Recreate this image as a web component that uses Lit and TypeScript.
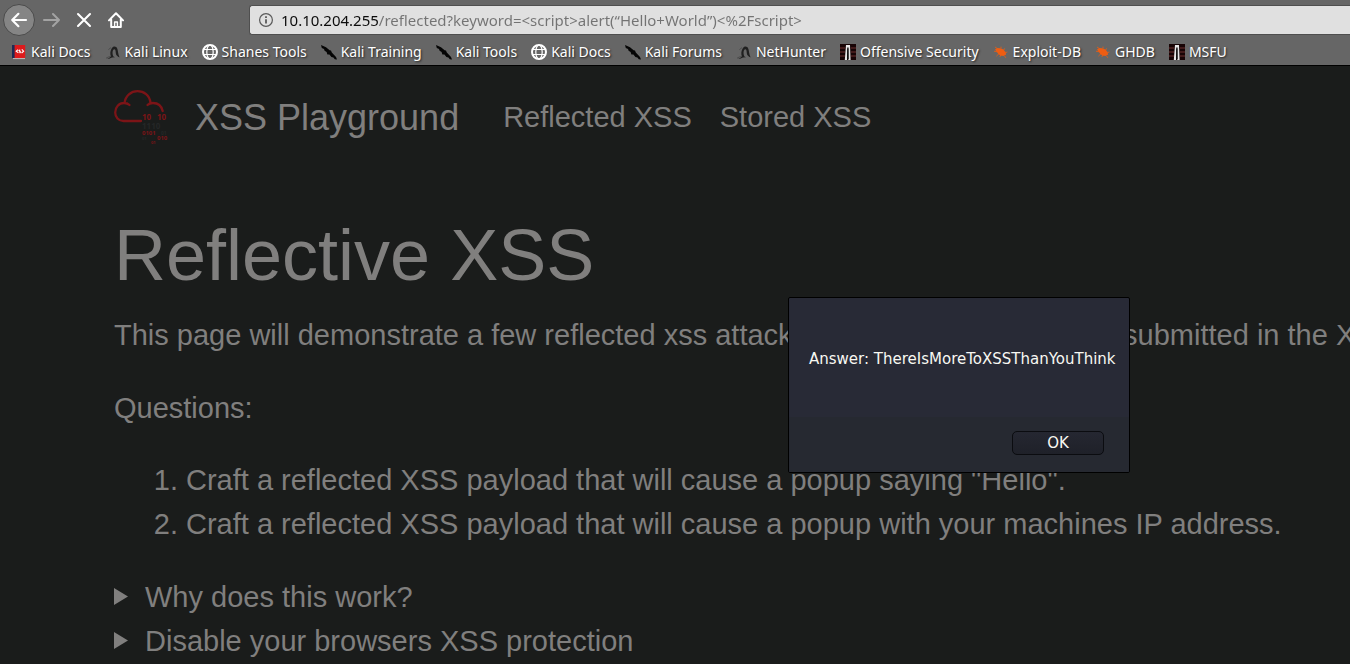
import { LitElement, html, css, svg, TemplateResult } from "lit";
import { customElement, state } from "lit/decorators.js";

type IconName = "docs" | "dragon" | "globe" | "knife" | "offsec" | "bug";

const ICONS: Record<IconName, TemplateResult> = {
  docs: svg`<rect x="1" y="1" width="3" height="13" fill="#1d2a55"/><rect x="3.6" y="1" width="10.6" height="13" fill="#dd1a1c"/>
    <path d="M2 14.6h12" stroke="#c9b9b9" stroke-width="1"/>
    <path d="M7 5.6L5.2 7.3 7.4 8.8M10.8 5.4L12.6 7.2 10.6 9M7.6 6.2L10 8.4M8.6 5.6L9 9.2" stroke="#fff" stroke-width="1.1" fill="none"/>`,
  dragon: svg`<path d="M3.4 5.6L6 3.6M1 14.2C4 12.6 5 12.4 6.2 12.2" stroke="#4c4c4c" stroke-width="1" fill="none"/>
    <path d="M1.4 14.6C3.6 14.4 4.6 13.6 6 12.4 4.8 10 5.2 6.6 6.8 4.2 8.4 1.8 11.4 2.2 12.4 5 13.2 7.4 12.8 9.4 14.6 13.4 12.6 12.6 11 11.4 10.8 9.2 10.7 7.2 10.6 5.2 9.2 5.2 7.6 5.4 6.9 9 8.4 12.4L10 13.2 7 13.4C5 14.4 3.4 15 1.4 14.6z" fill="#202020"/>`,
  globe: svg`<g fill="none" stroke="#fff"><circle cx="8" cy="8" r="7" stroke-width="2"/><ellipse cx="8" cy="8" rx="3.2" ry="7" stroke-width="1.2"/><path d="M1.4 5.5h13.2M1.4 10.5h13.2" stroke-width="1.2"/></g>`,
  knife: svg`<path d="M0 1L5 3.2 8.6 6.2 10 6.4 10.8 8.6 15 13 16 15.4 13.8 15.2 12.4 13.4 10.4 13 8.4 10.6 6.4 10.6 5.6 8 3.6 6.8 3 5 .8 4z" fill="#050505"/>`,
  offsec: svg`<path d="M0 0h16v16H0z" fill="#170405"/><path d="M0 4h5M11 4h5M0 8h5M11 8h5M0 12h5M11 12h5" stroke="#522222" stroke-width="1.4"/>
    <path d="M6 1h4l.6 15H8.4L8.2 5H7.6L7 16H4.8z" fill="#e8e6e6"/><path d="M7.2 3.6h1.4V15H7z" fill="#111"/>`,
  bug: svg`<path d="M2 5.6L4.4 4 7.2 4.2 10.4 5.4 12.6 8 13.2 10.6 10.4 12 7.2 11.4 4.8 9.2z" fill="#ee5d12"/>
    <path d="M2 3l3 2M8 2.6v2M11.6 4.4l-1 2M1 7.2l3.4.6M3.4 12.2l2.6-2.6M6.8 13l1.2-2.2M11.4 11.8l1.4 2M12.6 8.6L14.4 8" stroke="#ee5d12" stroke-width=".8"/>`,
};

const BOOKMARKS: { icon: IconName; label: string }[] = [
  { icon: "docs", label: "Kali Docs" },
  { icon: "dragon", label: "Kali Linux" },
  { icon: "globe", label: "Shanes Tools" },
  { icon: "knife", label: "Kali Training" },
  { icon: "knife", label: "Kali Tools" },
  { icon: "globe", label: "Kali Docs" },
  { icon: "knife", label: "Kali Forums" },
  { icon: "dragon", label: "NetHunter" },
  { icon: "offsec", label: "Offensive Security" },
  { icon: "bug", label: "Exploit-DB" },
  { icon: "bug", label: "GHDB" },
  { icon: "offsec", label: "MSFU" },
];

@customElement("browser-chrome")
class BrowserChrome extends LitElement {
  static styles = css`
    :host { display: block; background: #666; border-bottom: 1px solid #000; font-family: "Noto Sans", sans-serif; }
    .toolbar { display: flex; align-items: center; height: 40px; padding-left: 3px; }
    .tool { width: 32px; height: 32px; flex: none; padding: 0; border: 0; background: none; display: grid; place-items: center; color: #fff; }
    .tool svg { width: 18px; height: 18px; }
    .back { background: #858585; border: 1px solid #4b4b4b; border-radius: 50%; }
    .forward { color: #a3a3a3; }
    .address { flex: 1; display: flex; align-items: center; gap: 7px; height: 28px; margin-left: 118px; padding-left: 8px; background: #e0e0e0; border: 1px solid #4f4f4f; border-right: 0; border-radius: 3px 0 0 3px; }
    .address svg { width: 16px; height: 16px; flex: none; }
    .url { flex: 1; min-width: 0; border: 0; padding: 0; outline: 0; font: 15px/20px "Noto Sans", sans-serif; color: transparent; background: linear-gradient(90deg, #0c0c0c 98px, #737373 98px); -webkit-background-clip: text; background-clip: text; }
    .bookmarks { display: flex; gap: 14px; padding: 0 0 1px 11px; height: 24px; align-items: center; overflow: hidden; }
    .bookmark { display: flex; align-items: center; gap: 4px; flex: none; color: #fff; font-size: 14px; line-height: 20px; text-decoration: none; text-shadow: 1px 1px 2px #222; }
    .bookmark svg { width: 16px; height: 16px; }
  `;

  render() {
    return html`
      <div class="toolbar">
        <button class="tool back" aria-label="Back"><svg viewBox="0 0 18 18" fill="none" stroke="currentColor" stroke-width="2.2" stroke-linecap="round" stroke-linejoin="round"><path d="M16 9H2.2M8.4 2.8L2.2 9l6.2 6.2"/></svg></button>
        <button class="tool forward" aria-label="Forward"><svg viewBox="0 0 18 18" fill="none" stroke="currentColor" stroke-width="2" stroke-linecap="round" stroke-linejoin="round"><path d="M2 9h15M11 3l6 6-6 6"/></svg></button>
        <button class="tool" aria-label="Stop"><svg viewBox="0 0 18 18" fill="none" stroke="currentColor" stroke-width="2.1" stroke-linecap="round"><path d="M4 3l12 12M16 3L4 15"/></svg></button>
        <button class="tool" aria-label="Home"><svg viewBox="0 0 18 18" fill="none" stroke="currentColor" stroke-width="2" stroke-linejoin="round" stroke-linecap="round"><path d="M3 9.4L10 2.2l7 7.2M5.2 8.4V16h9.6V8.4"/><path d="M8.6 16v-5h2.8v5" stroke-width="1.4"/></svg></button>
        <div class="address">
          <svg viewBox="0 0 16 16" fill="none" stroke="#5a5a5a"><circle cx="8" cy="8" r="6.4" stroke-width="1.2"/><path d="M8 7.2v4.4M8 4.2v1.8" stroke-width="1.8"/></svg>
          <input class="url" aria-label="Address" .value=${"10.10.204.255/reflected?keyword=<script>alert(“Hello+World”)<%2Fscript>"} />
        </div>
      </div>
      <nav class="bookmarks" aria-label="Bookmarks">
        ${BOOKMARKS.map((b) => html`<a class="bookmark" href="#"><svg viewBox="0 0 16 16">${ICONS[b.icon]}</svg>${b.label}</a>`)}
      </nav>
    `;
  }
}

@customElement("alert-dialog")
class AlertDialog extends LitElement {
  static styles = css`
    :host { display: block; box-sizing: border-box; width: 342px; background: #282a36; border: 1px solid #000; border-radius: 2px; color: #f8f8f2; font-family: "DejaVu Sans", sans-serif; font-size: 15px; line-height: 18px; overflow: hidden; }
    .message { margin: 0; padding: 52px 14px 49px 20px; white-space: nowrap; }
    .actions { display: flex; justify-content: flex-end; padding: 14px 25px 17px; background: #262931; }
    .ok { width: 92px; height: 24px; padding: 0; border: 1px solid #0b0c10; border-radius: 5px; background: linear-gradient(#252731, #1f2129); color: inherit; font: inherit; }
  `;

  render() {
    return html`
      <p class="message">Answer: ThereIsMoreToXSSThanYouThink</p>
      <div class="actions"><button class="ok" @click=${() => this.dispatchEvent(new Event("close"))}>OK</button></div>
    `;
  }
}

@customElement("app-root")
class AppRoot extends LitElement {
  @state() private open = true;

  static styles = css`
    :host { display: flex; flex-direction: column; height: 100vh; overflow: hidden; position: relative; background: #1a1c1b; color: #807f7e; font: 29px/1.5 "Liberation Sans", Arial, sans-serif; }
    browser-chrome { flex: none; }
    .page { flex: 1; min-height: 0; overflow: hidden; padding-left: 114px; }
    .navbar { display: flex; align-items: center; height: 104px; white-space: nowrap; }
    .navbar a { color: inherit; text-decoration: none; }
    .brand { display: flex; align-items: center; gap: 27px; font-size: 36px; line-height: 54px; margin-right: 44px; }
    .logo { width: 54px; height: 56px; font-family: "Noto Sans", sans-serif; font-weight: 700; }
    .links { display: flex; gap: 28px; }
    h1 { margin: 42px 0 16px; font-size: 72px; font-weight: 400; line-height: 1.2; }
    p { margin: 0 0 29px; white-space: nowrap; }
    ol { margin: 0 0 30px; padding-left: 72px; }
    summary { display: flex; align-items: center; gap: 17px; list-style: none; }
    summary svg { width: 14px; height: 20px; fill: #807f7e; }
    alert-dialog { position: absolute; left: 788px; top: 297px; }
  `;

  render() {
    const arrow = html`<svg viewBox="0 0 14 20"><path d="M0 0L14 8.5 0 17z"/></svg>`;
    return html`
      <browser-chrome></browser-chrome>
      <main class="page">
        <nav class="navbar">
          <a class="brand" href="#">
            <svg class="logo" viewBox="0 0 54 56" aria-hidden="true">
              <path d="M27 31H9.500C4.500 31 1.200 27 1.200 22.500 1.200 17 5 13 10 13c2 0 4 .6 5.500 2M10.500 13C11.500 5.500 17 1.200 23.500 1.200 30 1.200 35.500 5 36.500 12.500M33.500 15C35 13.500 37 13 39 13c5 0 8.500 3 9.700 8" fill="none" stroke="#7c1417" stroke-width="2.3" stroke-linecap="round"/>
              <g fill="#7c1417"><text x="28" y="30" font-size="8">10</text><text x="43" y="30" font-size="8">10</text><text x="28" y="45" font-size="6">0101</text><text x="43" y="50" font-size="6">010</text><text x="37" y="54" font-size="4">01</text></g>
              <g fill="#252727"><text x="28" y="39" font-size="8">1110</text><text x="47" y="45" font-size="5">01</text><text x="28" y="50" font-size="4">01</text></g>
            </svg>
            XSS Playground
          </a>
          <div class="links"><a href="#">Reflected XSS</a><a href="#">Stored XSS</a></div>
        </nav>
        <h1>Reflective XSS</h1>
        <p>This page will demonstrate a few reflected xss attacks. Any payload should be submitted in the XSS</p>
        <p>Questions:</p>
        <ol>
          <li>Craft a reflected XSS payload that will cause a popup saying "Hello".</li>
          <li>Craft a reflected XSS payload that will cause a popup with your machines IP address.</li>
        </ol>
        <details><summary>${arrow}Why does this work?</summary></details>
        <details><summary>${arrow}Disable your browsers XSS protection</summary></details>
      </main>
      ${this.open ? html`<alert-dialog role="alertdialog" @close=${() => (this.open = false)}></alert-dialog>` : null}
    `;
  }
}
